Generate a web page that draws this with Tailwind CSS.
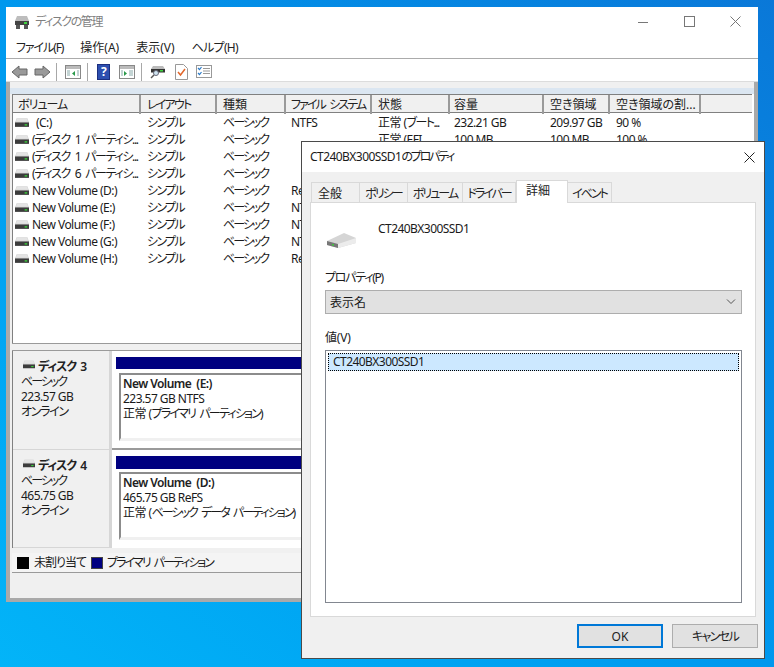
<!DOCTYPE html>
<html lang="ja"><head><meta charset="utf-8">
<script src="https://cdn.jsdelivr.net/npm/@tailwindcss/browser@4"></script>
</head>
<body class="m-0 overflow-hidden">
<svg width="0" height="0" class="absolute"><defs>
<symbol id="drv" viewBox="0 0 16 12"><path d="M2 1h12l2 5v4H0V6z" fill="#c9c9c9"/><path d="M2 1h12l1 4H1z" fill="#e4e4e4"/><rect x="0" y="6" width="16" height="5" fill="#3c3c3c"/><rect x="11" y="8" width="3" height="1.5" fill="#38d438"/></symbol>
</defs></svg>
<div class="relative w-[774px] h-[667px] overflow-hidden bg-linear-to-bl from-[#0a78d8] via-[#0098ee] to-[#03b4f8] text-[12px] leading-[17px] tracking-[-0.55px] text-[#1a1a1a] [font-feature-settings:'palt'] [font-family:'Noto_Sans','Noto_Sans_CJK_JP',sans-serif]">

<!-- main window -->
<div class="absolute left-[6px] top-[7px] w-[752px] h-[595px] bg-white flex flex-col">
  <div class="h-[29px] shrink-0 flex items-center pl-[8px] bg-white">
    <svg width="16" height="16" viewBox="0 0 16 16" class="mr-[5px]"><path d="M3 2h10l2 5H1z" fill="#bdbdbd"/><rect x="1" y="7" width="14" height="4" fill="#444"/><rect x="10" y="8" width="3" height="2" fill="#3fd43f"/><rect x="2" y="11" width="4" height="4" fill="#555"/><rect x="10" y="11" width="4" height="4" fill="#555"/></svg>
    <span class="text-[#7f7f7f] tracking-[-1.4px]">ディスクの管理</span>
    <div class="ml-auto flex items-center">
      <svg width="12" height="12" viewBox="0 0 12 12" class="mr-[35px]"><path d="M1 6.500h10" stroke="#777" /></svg>
      <svg width="11" height="11" viewBox="0 0 11 11" class="mr-[35px]"><rect x=".5" y=".5" width="10" height="10" fill="none" stroke="#777"/></svg>
      <svg width="11" height="11" viewBox="0 0 11 11" class="mr-[17px]"><path d="M.5.500l10 10M10.500.500l-10 10" stroke="#777" fill="none"/></svg>
    </div>
  </div>
  <div class="h-[23px] shrink-0 flex items-center pl-[10px] gap-[17px] text-[#222] border-b border-[#ababab]">
    <span class="tracking-[-1.1px]">ファイル(F)</span><span class="tracking-[0px]">操作(A)</span><span class="tracking-[0px]">表示(V)</span><span class="tracking-[-0.7px]">ヘルプ(H)</span>
  </div>
  <div class="h-[23px] shrink-0 flex items-center pl-[5px] pt-[3px] border-b border-[#dcdcdc]">
    <svg width="17" height="14" viewBox="0 0 17 14" class="mr-[6px]"><path d="M8 1L1 7l7 6V10h8V4H8z" fill="#9a9a9a" stroke="#666"/></svg>
    <svg width="17" height="14" viewBox="0 0 17 14" class="mr-[5px]"><path d="M9 1l7 6-7 6V10H1V4h8z" fill="#9a9a9a" stroke="#666"/></svg>
    <div class="w-px h-[18px] bg-[#a8a8a8] mr-[8px]"></div>
    <svg width="16" height="14" viewBox="0 0 16 14" class="mr-[6px]"><rect x=".5" y=".5" width="15" height="13" fill="#fff" stroke="#888"/><rect x="1" y="1" width="14" height="3" fill="#bbb"/><path d="M10 6v5L7 8.500z" fill="#2a9a4a"/><path d="M2 6h3M2 8h3M2 10h3M12 6h2M12 8h2M12 10h2" stroke="#8aa"/></svg>
    <div class="w-px h-[18px] bg-[#a8a8a8] mr-[9px]"></div>
    <div class="w-[13px] h-[16px] mr-[9px] bg-[#2d4fb0] border border-[#1b2f80] text-white text-[12px] leading-[14px] text-center font-bold">?</div>
    <svg width="16" height="14" viewBox="0 0 16 14" class="mr-[6px]"><rect x=".5" y=".5" width="15" height="13" fill="#fff" stroke="#888"/><rect x="1" y="1" width="14" height="3" fill="#bbb"/><path d="M5 6v5l3-2.500z" fill="#2a9a4a"/><path d="M2 6h2M2 8h2M2 10h2M10 6h4M10 8h4M10 10h4" stroke="#8aa"/></svg>
    <div class="w-px h-[18px] bg-[#a8a8a8] mr-[8px]"></div>
    <svg width="16" height="15" viewBox="0 0 16 15" class="mr-[9px]"><path d="M3 2h10l2 3v3H1V5z" fill="#bbb"/><rect x="1" y="5" width="14" height="3.500" fill="#333"/><rect x="10" y="6" width="3" height="1.500" fill="#3fd43f"/><circle cx="6" cy="9" r="2.500" fill="#cfe4f0" stroke="#667"/><path d="M4 11l-3 3" stroke="#555" stroke-width="1.500"/></svg>
    <svg width="13" height="16" viewBox="0 0 13 16" class="mr-[8px]"><path d="M.5.500h8l4 4v11H.5z" fill="#fff" stroke="#999"/><path d="M3 8l2.500 3L10 5" fill="none" stroke="#e2662a" stroke-width="1.500"/></svg>
    <svg width="16" height="13" viewBox="0 0 16 13"><rect x=".5" y=".5" width="15" height="12" fill="#fff" stroke="#999"/><path d="M2 3l1.500 1.500L5.500 2M2 8l1.500 1.500L5.500 7" fill="none" stroke="#2b7bc9" stroke-width="1.200"/><path d="M7 3.500h7M7 6h7M7 8.500h7" stroke="#999"/></svg>
  </div>
  <div class="flex-1 min-h-0 flex flex-col bg-[#f0f0f0] pt-[6px] border-l-[4px] border-r-[4px] border-b-[4px] border-[#a9a9a9] border-t-0">
    <div class="h-[6px] shrink-0 bg-[#dbe6f1]"></div>
    <!-- list -->
    <div class="h-[249px] shrink-0 bg-white ml-[2px] pr-[2px] border-l border-[#808080] flex flex-col overflow-hidden">
      <div class="grid grid-cols-[128px_76px_69px_86px_78px_94px_66px_91px_1fr] h-[19px] shrink-0 border-t border-b border-[#808080] bg-[#f0f0f0] text-[#222] whitespace-nowrap leading-[19px]">
        <div class="pl-[5px] border-r-2 border-[#9a9a9a] tracking-[-1px]">ボリューム</div>
        <div class="pl-[6px] border-r-2 border-[#9a9a9a] tracking-[-1.8px]">レイアウト</div>
        <div class="pl-[6px] border-r-2 border-[#9a9a9a] tracking-[0px]">種類</div>
        <div class="pl-[5px] border-r-2 border-[#9a9a9a] tracking-[-1.9px] [word-spacing:3px]">ファイル システム</div>
        <div class="pl-[6px] border-r-2 border-[#9a9a9a] tracking-[0px]">状態</div>
        <div class="pl-[4px] border-r-2 border-[#9a9a9a] tracking-[0px]">容量</div>
        <div class="pl-[6px] border-r-2 border-[#9a9a9a] tracking-[0px]">空き領域</div>
        <div class="pl-[6px] border-r-2 border-[#9a9a9a] tracking-[0px]">空き領域の割...</div>
        <div></div>
      </div>
      <div class="pt-[1px] grid grid-cols-[128px_76px_69px_86px_78px_94px_66px_91px] auto-rows-[17px] [&>div]:whitespace-nowrap">
        <div class="flex items-center pl-[2px]"><svg width="14" height="11" class="mr-[6px] shrink-0"><use href="#drv"/></svg><span class="ml-[1px]">(C:)</span></div><div class="pl-[6px] tracking-[-1.7px]">シンプル</div><div class="pl-[6px] tracking-[-2px]">ベーシック</div><div class="pl-[5px]">NTFS</div><div class="pl-[6px]">正常 (<span class="tracking-[-1.5px]">ブート...</span></div><div class="pl-[4px]">232.21 GB</div><div class="pl-[6px]">209.97 GB</div><div class="pl-[6px]">90 %</div>
        <div class="flex items-center pl-[2px]"><svg width="14" height="11" class="mr-[3px] shrink-0"><use href="#drv"/></svg><span class="tracking-[-1.35px] [word-spacing:3px]">(ディスク 1 パーティシ...</span></div><div class="pl-[6px] tracking-[-1.7px]">シンプル</div><div class="pl-[6px] tracking-[-2px]">ベーシック</div><div class="pl-[5px]"></div><div class="pl-[6px]">正常 (EFI ...</div><div class="pl-[4px]">100 MB</div><div class="pl-[6px]">100 MB</div><div class="pl-[6px]">100 %</div>
        <div class="flex items-center pl-[2px]"><svg width="14" height="11" class="mr-[3px] shrink-0"><use href="#drv"/></svg><span class="tracking-[-1.35px] [word-spacing:3px]">(ディスク 1 パーティシ...</span></div><div class="pl-[6px] tracking-[-1.7px]">シンプル</div><div class="pl-[6px] tracking-[-2px]">ベーシック</div><div class="col-span-5"></div>
        <div class="flex items-center pl-[2px]"><svg width="14" height="11" class="mr-[3px] shrink-0"><use href="#drv"/></svg><span class="tracking-[-1.35px] [word-spacing:3px]">(ディスク 6 パーティシ...</span></div><div class="pl-[6px] tracking-[-1.7px]">シンプル</div><div class="pl-[6px] tracking-[-2px]">ベーシック</div><div class="col-span-5"></div>
        <div class="flex items-center pl-[2px]"><svg width="14" height="11" class="mr-[3px] shrink-0"><use href="#drv"/></svg>New Volume (D:)</div><div class="pl-[6px] tracking-[-1.7px]">シンプル</div><div class="pl-[6px] tracking-[-2px]">ベーシック</div><div class="pl-[5px] col-span-5">ReFS</div>
        <div class="flex items-center pl-[2px]"><svg width="14" height="11" class="mr-[3px] shrink-0"><use href="#drv"/></svg>New Volume (E:)</div><div class="pl-[6px] tracking-[-1.7px]">シンプル</div><div class="pl-[6px] tracking-[-2px]">ベーシック</div><div class="pl-[5px] col-span-5">NTFS</div>
        <div class="flex items-center pl-[2px]"><svg width="14" height="11" class="mr-[3px] shrink-0"><use href="#drv"/></svg>New Volume (F:)</div><div class="pl-[6px] tracking-[-1.7px]">シンプル</div><div class="pl-[6px] tracking-[-2px]">ベーシック</div><div class="pl-[5px] col-span-5">NTFS</div>
        <div class="flex items-center pl-[2px]"><svg width="14" height="11" class="mr-[3px] shrink-0"><use href="#drv"/></svg>New Volume (G:)</div><div class="pl-[6px] tracking-[-1.7px]">シンプル</div><div class="pl-[6px] tracking-[-2px]">ベーシック</div><div class="pl-[5px] col-span-5">NTFS</div>
        <div class="flex items-center pl-[2px]"><svg width="14" height="11" class="mr-[3px] shrink-0"><use href="#drv"/></svg>New Volume (H:)</div><div class="pl-[6px] tracking-[-1.7px]">シンプル</div><div class="pl-[6px] tracking-[-2px]">ベーシック</div><div class="pl-[5px] col-span-5">ReFS</div>
      </div>
    </div>
    <!-- splitter -->
    <div class="h-[8px] shrink-0 ml-[2px] border-t border-b border-[#9a9a9a] bg-[#f0f0f0]"></div>
    <!-- disks -->
    <div class="ml-[2px] flex flex-col bg-white border-l border-[#808080]">
      <div class="flex h-[99px]">
        <div class="w-[99px] shrink-0 pl-[8px] pt-[7px] bg-[#f0f0f0] border-r-[3px] border-b border-[#d6d6d6]">
          <div class="flex items-center"><svg width="14" height="9" class="ml-[1px] mr-[2px] -mt-[4px] shrink-0"><use href="#drv"/></svg><span class="font-semibold text-[#222] tracking-[-1px] [word-spacing:2px]">ディスク 3</span></div>
          <div class="leading-[15px] -mt-[1px]"><span class="tracking-[-2px]">ベーシック</span><br>223.57 GB<br><span class="tracking-[-1.3px]">オンライン</span></div>
        </div>
        <div class="flex-1 pl-[4px] pt-[6px] border-b-2 border-[#9a9a9a] whitespace-nowrap overflow-hidden">
          <div class="h-[12px] bg-[#000080]"></div>
          <div class="mt-[4px] h-[68px] ml-[3px] border-l-2 border-t-2 border-[#8c8c8c] border-b-[3px] border-b-[#f0f0f0] pl-[2px] pt-[1px] leading-[15px]">
            <div class="font-semibold text-[#222]">New Volume&nbsp; (E:)</div><div>223.57 GB NTFS</div><div>正常 (<span class="tracking-[-1.8px] [word-spacing:3px]">プライマリ パーティション)</span></div>
          </div>
        </div>
      </div>
      <div class="flex h-[98px]">
        <div class="w-[99px] shrink-0 pl-[8px] pt-[7px] bg-[#f0f0f0] border-r-[3px] border-b border-[#d6d6d6]">
          <div class="flex items-center"><svg width="14" height="9" class="ml-[1px] mr-[2px] -mt-[4px] shrink-0"><use href="#drv"/></svg><span class="font-semibold text-[#222] tracking-[-1px] [word-spacing:2px]">ディスク 4</span></div>
          <div class="leading-[15px] -mt-[1px]"><span class="tracking-[-2px]">ベーシック</span><br>465.75 GB<br><span class="tracking-[-1.3px]">オンライン</span></div>
        </div>
        <div class="flex-1 pl-[4px] pt-[6px] whitespace-nowrap overflow-hidden">
          <div class="h-[13px] bg-[#000080]"></div>
          <div class="mt-[3px] h-[68px] ml-[3px] border-l-2 border-t-2 border-[#8c8c8c] border-b-[3px] border-b-[#f0f0f0] pl-[2px] pt-[1px] leading-[15px]">
            <div class="font-semibold text-[#222]">New Volume&nbsp; (D:)</div><div>465.75 GB ReFS</div><div>正常 (<span class="tracking-[-1.95px] [word-spacing:3px]">ベーシック データ パーティション)</span></div>
          </div>
        </div>
      </div>
    </div>
    <!-- legend -->
    <div class="h-[20px] shrink-0 ml-[2px] mt-[5px] flex items-center pl-[5px] border-b border-[#9a9a9a] bg-[#f4f4f4]">
      <div class="w-[12px] h-[12px] bg-black mr-[5px]"></div><span class="mr-[5px] tracking-[-1px]">未割り当て</span>
      <div class="w-[12px] h-[12px] bg-[#000080] mr-[4px] border border-[#444]"></div><span class="tracking-[-2px] [word-spacing:3px]">プライマリ パーティション</span>
    </div>
    <div class="flex-1"></div>
  </div>
</div>

<!-- dialog -->
<div class="absolute left-[301px] top-[141px] w-[464px] h-[518px] bg-[#f0f0f0] border border-[#4a4a4a] flex flex-col">
  <div class="h-[30px] shrink-0 bg-white flex items-center pl-[8px] pb-[2px]">
    <span>CT240BX300SSD1<span class="tracking-[-2.2px]">のプロパティ</span></span>
    <svg width="11" height="11" viewBox="0 0 11 11" class="ml-auto mr-[9px] mt-[2px]"><path d="M.5.500l10 10M10.500.500l-10 10" stroke="#222" fill="none"/></svg>
  </div>
  <div class="flex-1 min-h-0 flex flex-col px-[8px] pt-[8px]">
    <div class="flex items-end pl-[1px] h-[23px] shrink-0 text-[#222] relative z-10 -mb-px whitespace-nowrap">
      <div class="w-[48px] h-[21px] border border-r-0 border-[#d9d9d9] bg-[#f0f0f0] pl-[6px] leading-[22px] tracking-[0px]">全般</div>
      <div class="w-[48px] h-[21px] border border-r-0 border-[#d9d9d9] bg-[#f0f0f0] text-center leading-[22px] tracking-[-2px]">ポリシー</div>
      <div class="w-[55px] h-[21px] border border-r-0 border-[#d9d9d9] bg-[#f0f0f0] text-center leading-[22px] tracking-[-2px]">ボリューム</div>
      <div class="w-[54px] h-[21px] border border-[#d9d9d9] bg-[#f0f0f0] text-center leading-[22px] tracking-[-2px]">ドライバー</div>
      <div class="w-[52px] h-[23px] border border-b-0 border-[#d9d9d9] bg-white pl-[9px] leading-[20px] tracking-[0px]">詳細</div>
      <div class="w-[44px] h-[21px] border border-l-0 border-[#d9d9d9] bg-[#f0f0f0] text-center leading-[22px] tracking-[-2px]">イベント</div>
    </div>
    <div class="h-[415px] shrink-0 bg-white border border-[#d9d9d9] pl-[14px] pr-[13px] pt-[18px]">
      <div class="flex h-[43px]">
        <svg width="31" height="17" viewBox="0 0 31 17" class="mt-[11px] ml-[1px]"><path d="M1 9L18 1l12 5v5L12 16 1 13z" fill="#d5d5d5"/><path d="M1 9l11 3v4L1 13z" fill="#777"/><path d="M12 12l18-6v5L12 16z" fill="#ececec"/><rect x="6" y="12" width="2" height="1.500" fill="#3cc83c"/></svg>
        <span class="ml-[21px] -mt-[1px]">CT240BX300SSD1</span>
      </div>
      <div class="mt-[2px] h-[24px] leading-[23px] tracking-[-1.25px]">プロパティ(P)</div>
      <div class="h-[24px] bg-[#e1e1e1] border border-[#adadad] flex items-center pl-[4px] pr-[5px]">
        <span class="tracking-[0px]">表示名</span>
        <svg width="10" height="6" viewBox="0 0 10 6" class="ml-auto"><path d="M1 .500l4 4 4-4" fill="none" stroke="#555"/></svg>
      </div>
      <div class="mt-[15px] h-[21px] tracking-[-0.2px]">値(V)</div>
      <div class="h-[253px] border border-[#828790] p-[2px]">
        <div class="h-[18px] bg-[#cce8ff] border border-dotted border-black pl-[4px] leading-[15px]">CT240BX300SSD1</div>
      </div>
    </div>
    <div class="flex justify-end gap-[9px] mt-[7px] -mr-[2px]">
      <button class="w-[86px] h-[24px] bg-[#e1e1e1] border-2 border-[#0078d7] text-[#222] tracking-[0px]">OK</button>
      <button class="w-[86px] h-[24px] bg-[#e1e1e1] border border-[#adadad] text-[#222] tracking-[-1.6px]">キャンセル</button>
    </div>
  </div>
</div>
</div>
</body></html>
